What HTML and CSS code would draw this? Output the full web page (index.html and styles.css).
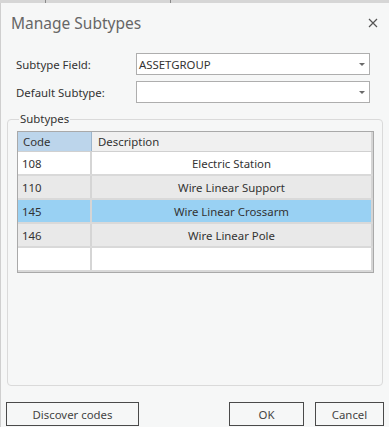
FILE: index.html
```html
<!DOCTYPE html>
<html>
<head>
<meta charset="utf-8">
<link rel="stylesheet" href="styles.css">
</head>
<body>
<div class="page">
  <div class="backdrop"><span class="tick t1"></span><span class="tick t2"></span></div>
  <div class="dialog">
    <div class="titlebar">
      <span class="title">Manage Subtypes</span>
      <svg class="close" width="10" height="10" viewBox="0 0 10 10"><path d="M1 1 L9 9 M9 1 L1 9" stroke="#555" stroke-width="1.2" fill="none"/></svg>
    </div>
    <div class="form">
      <div class="field">
        <span class="label">Subtype Field:</span>
        <div class="combo"><span class="combo-text">ASSETGROUP</span><span class="arrow"></span></div>
      </div>
      <div class="field">
        <span class="label">Default Subtype:</span>
        <div class="combo"><span class="combo-text"></span><span class="arrow"></span></div>
      </div>
    </div>
    <fieldset class="group">
      <legend class="legend">Subtypes</legend>
      <div class="grid">
        <div class="row head">
          <div class="cell code sel-head">Code</div>
          <div class="cell desc head-desc">Description</div>
        </div>
        <div class="row white">
          <div class="cell code">108</div>
          <div class="cell desc center">Electric Station</div>
        </div>
        <div class="row grey">
          <div class="cell code">110</div>
          <div class="cell desc center">Wire Linear Support</div>
        </div>
        <div class="row blue">
          <div class="cell code">145</div>
          <div class="cell desc center">Wire Linear Crossarm</div>
        </div>
        <div class="row grey">
          <div class="cell code">146</div>
          <div class="cell desc center">Wire Linear Pole</div>
        </div>
        <div class="row white">
          <div class="cell code"></div>
          <div class="cell desc center"></div>
        </div>
      </div>
    </fieldset>
    <div class="buttons">
      <button class="btn discover">Discover codes</button>
      <div class="spacer"></div>
      <button class="btn ok">OK</button>
      <button class="btn cancel">Cancel</button>
    </div>
  </div>
</div>
</body>
</html>
```
FILE: styles.css
```css
* { box-sizing: border-box; }
html, body { margin: 0; padding: 0; }
body {
  font-family: "Noto Sans", "Open Sans", sans-serif;
  font-size: 11.4px;
  color: #333;
  background: #f6f7f7;
}
.page {
  width: 389px;
  height: 427px;
  display: flex;
  flex-direction: column;
  overflow: hidden;
}
.backdrop {
  height: 3px;
  background: #d6d6d6;
  position: relative;
  flex: none;
}
.tick { position: absolute; top: 0; width: 1px; height: 3px; background: #8a8a8a; }
.t1 { left: 45px; }
.t2 { left: 170px; }
.dialog {
  flex: 1;
  background: #f6f7f7;
  border-left: 1px solid #cfcfcf;
  display: flex;
  flex-direction: column;
}
.titlebar {
  height: 36px;
  display: flex;
  align-items: center;
  justify-content: space-between;
  padding: 4px 11px 0 10px;
}
.title {
  font-size: 15.5px;
  color: #666;
}
.close { display: block; }
.form {
  display: flex;
  flex-direction: column;
  gap: 6px;
  padding: 14px 0 0 15px;
}
.field {
  display: flex;
  align-items: center;
  height: 22px;
}
.label {
  width: 120px;
  color: #333;
}
.combo {
  width: 234px;
  height: 22px;
  background: #fff;
  border: 1px solid #aeaeae;
  display: flex;
  align-items: center;
  justify-content: space-between;
  padding: 0 4px 0 2px;
}
.combo-text { color: #333; }
.arrow {
  width: 0; height: 0;
  border-left: 3px solid transparent;
  border-right: 3px solid transparent;
  border-top: 3px solid #6a6a6a;
  margin-top: 1px;
}
.group {
  margin: 8px 6px 0 6px;
  border: 1px solid #dadada;
  border-radius: 4px;
  padding: 4px 8px 4px 9px;
  height: 275px;
  display: flex;
  flex-direction: column;
  min-width: 0;
}
.legend {
  padding: 0 1px;
  margin-left: 2px;
  font-size: 11.4px;
  line-height: 16px;
  color: #333;
}
.grid {
  flex: 1;
  height: 249px;
  background: #fff;
  border: 1px solid #a9a9a9;
  display: flex;
  flex-direction: column;
}
.row {
  display: flex;
  height: 24px;
  border-bottom: 2px solid #d9d9d9;
}
.row.head {
  height: 20px;
  border-bottom: 1px solid #d0d0d0;
}
.cell {
  display: flex;
  align-items: center;
  padding-left: 4px;
  white-space: nowrap;
}
.code {
  width: 74px;
  border-right: 2px solid #d5d5d5;
}
.desc {
  flex: 1;
  border-right: 2px solid #d5d5d5;
}
.center { justify-content: center; padding-left: 0; }
.sel-head { background: #bcd5eb; padding-left: 5px; }
.head-desc { background: #f0f0f0; padding-left: 6px; }
.white .cell { background: #fff; }
.grey .cell { background: #e9e9e9; }
.blue .cell { background: #99d1f3; }
.head .code { border-right: 1px solid #9cb5cc; }
.buttons {
  display: flex;
  padding: 16px 5px 0 5px;
  gap: 11px;
}
.spacer { flex: 1; }
.btn {
  font-family: "Noto Sans", "Open Sans", sans-serif;
  font-size: 11.4px;
  color: #444;
  background: #f6f7f7;
  border: 1px solid #4a4a4a;
  height: 24px;
  padding: 0;
}
.discover { width: 133px; }
.ok { width: 75px; }
.cancel { width: 69px; }
```
